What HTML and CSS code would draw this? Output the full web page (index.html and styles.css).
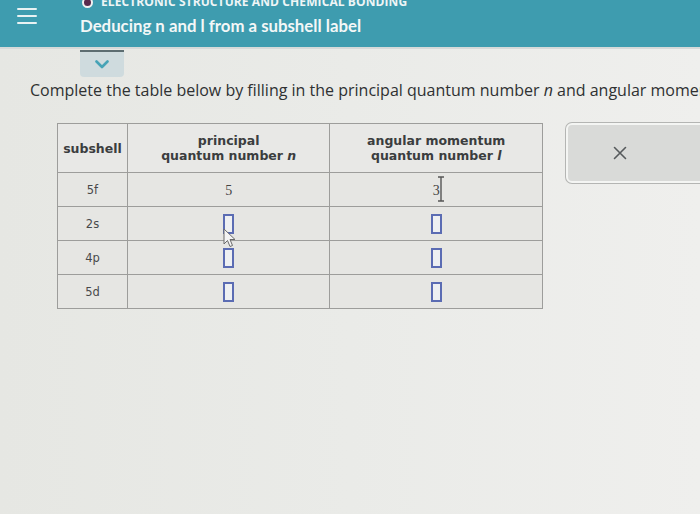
FILE: index.html
```html
<!DOCTYPE html>
<html>
<head>
<meta charset="utf-8">
<link rel="stylesheet" href="styles.css">
</head>
<body>
<header class="topbar">
  <div class="menu"><span></span><span></span><span></span></div>
  <div class="titles">
    <div class="category"><span class="dot"></span>ELECTRONIC STRUCTURE AND CHEMICAL BONDING</div>
    <div class="title">Deducing n and l from a subshell label</div>
  </div>
</header>
<main class="content">
  <div class="tabrow">
    <div class="tab">
      <svg width="14" height="9" viewBox="0 0 14 9"><path d="M1.5 1.5 L7 7 L12.5 1.5" fill="none" stroke="#46a3b6" stroke-width="2.6" stroke-linecap="round" stroke-linejoin="round"/></svg>
    </div>
  </div>
  <p class="prompt">Complete the table below by filling in the principal quantum number <i>n</i> and angular momentum quantum number <i>l</i> for each subshell.</p>
  <div class="work">
    <div class="tablewrap">
      <table class="grid">
        <thead>
          <tr>
            <th class="c1">subshell</th>
            <th class="c2">principal<br>quantum number <i>n</i></th>
            <th class="c3">angular momentum<br>quantum number <i>l</i></th>
          </tr>
        </thead>
        <tbody>
          <tr><td class="label">5f</td><td><span class="val">5</span></td><td><span class="val">3</span></td></tr>
          <tr><td class="label">2s</td><td><span class="box"></span></td><td><span class="box"></span></td></tr>
          <tr><td class="label">4p</td><td><span class="box"></span></td><td><span class="box"></span></td></tr>
          <tr><td class="label">5d</td><td><span class="box"></span></td><td><span class="box"></span></td></tr>
        </tbody>
      </table>
      <svg class="ibeam" width="8" height="26" viewBox="0 0 8 26"><path d="M1 1 H7 M4 1 V25 M1 25 H7" fill="none" stroke="#555" stroke-width="1.4"/></svg>
      <svg class="pointer" width="14" height="20" viewBox="0 0 14 20"><path d="M1 1 L1 16 L4.5 12.5 L7 18.5 L9.5 17.5 L7 11.5 L12 11.5 Z" fill="#f4f4f4" stroke="#6a6a6a" stroke-width="1" stroke-linejoin="round"/></svg>
    </div>
    <div class="tools">
      <svg width="14" height="14" viewBox="0 0 14 14"><path d="M1.5 1.5 L12.5 12.5 M12.5 1.5 L1.5 12.5" stroke="#565a5c" stroke-width="1.6" stroke-linecap="round"/></svg>
    </div>
  </div>
</main>
</body>
</html>
```
FILE: styles.css
```css
html, body {
  margin: 0;
  padding: 0;
}
body {
  width: 700px;
  height: 514px;
  overflow: hidden;
  background: linear-gradient(90deg, #e6e7e3 0%, #eaebe8 50%, #efefed 100%);
  font-family: "Open Sans", "DejaVu Sans", sans-serif;
}
.topbar {
  height: 47px;
  background: #3e9caf;
  display: flex;
  overflow: hidden;
  border-bottom: 2px solid #d6dad9;
}
.menu {
  width: 80px;
  flex: none;
  box-sizing: border-box;
  padding: 8px 0 0 17px;
  display: flex;
  flex-direction: column;
  gap: 5px;
}
.menu span {
  display: block;
  width: 20px;
  height: 2px;
  background: #e9f2f3;
  border-radius: 1px;
}
.titles {
  display: flex;
  flex-direction: column;
}
.category {
  margin-top: -4px;
  font-size: 12px;
  line-height: 12px;
  font-weight: 700;
  color: #eef5f6;
  white-space: nowrap;
  display: flex;
  align-items: center;
  letter-spacing: 0.1px;
}
.dot {
  width: 7px;
  height: 7px;
  border-radius: 50%;
  background: #5a2a4c;
  border: 2px solid #f1f1f1;
  margin: 0 8px 0 2px;
  flex: none;
}
.title {
  margin-top: 8px;
  font-family: "Lato", "Open Sans", sans-serif;
  font-size: 16.8px;
  line-height: 20px;
  font-weight: 700;
  color: #f3f7f7;
  white-space: nowrap;
}
.content {
  display: flex;
  flex-direction: column;
}
.tabrow {
  padding-left: 80px;
}
.tab {
  width: 44px;
  height: 25px;
  margin-top: 1px;
  background: #cfdbde;
  border-top: 2px solid #5d6d71;
  border-radius: 0 0 4px 4px;
  display: flex;
  align-items: center;
  justify-content: center;
}
.prompt {
  margin: 3px 0 0 30px;
  font-size: 16px;
  line-height: 20px;
  color: #2f3132;
  white-space: nowrap;
  overflow: hidden;
}
.work {
  margin-top: 23px;
  display: flex;
  align-items: flex-start;
  gap: 23px;
  padding-left: 57px;
}
.tablewrap {
  position: relative;
}
.grid {
  border-collapse: collapse;
  width: 486px;
  background: #e6e6e3;
  font-family: "DejaVu Sans", sans-serif;
  border: 1px solid #8f8f8f;
}
.grid th, .grid td {
  border: 1px solid #9d9d9b;
  text-align: center;
  padding: 0;
}
.grid th {
  height: 48px;
  font-size: 12.5px;
  line-height: 15px;
  font-weight: 700;
  color: #3b3d3e;
  background: #e8e8e6;
}
.grid th i {
  font-style: italic;
}
.c1 { width: 69px; }
.c2 { width: 202px; }
.c3 { width: 212px; }
.grid td {
  height: 33px;
}
.label {
  font-size: 11.5px;
  color: #48494a;
}
.val {
  font-family: "Liberation Serif", serif;
  font-size: 14px;
  color: #444;
}
.box {
  display: inline-block;
  width: 7px;
  height: 16px;
  border: 2px solid #5b6cb3;
  background: #eef0f2;
  vertical-align: middle;
}
.ibeam {
  position: absolute;
  left: 380px;
  top: 53px;
}
.pointer {
  position: absolute;
  left: 166px;
  top: 105px;
}
.tools {
  width: 150px;
  height: 56px;
  background: #d9dad8;
  border: 2px solid #f4f5f3;
  box-shadow: 0 0 0 1px #b4b5b3;
  border-radius: 6px;
  display: flex;
  align-items: center;
  padding-left: 45px;
  box-sizing: content-box;
  flex: none;
}
```
